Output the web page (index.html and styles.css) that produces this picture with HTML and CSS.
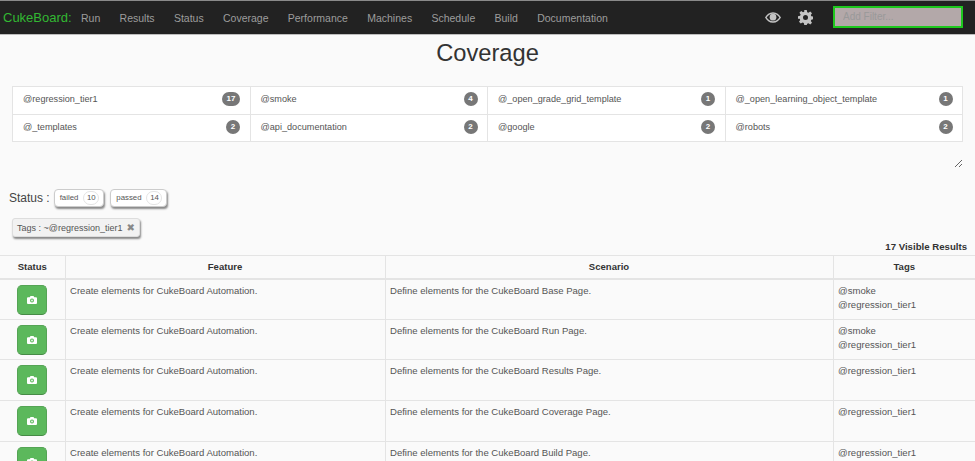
FILE: index.html
```html
<!DOCTYPE html>
<html lang="en">
<head>
<meta charset="utf-8">
<title>CukeBoard: Coverage</title>
<link rel="stylesheet" href="styles.css">
</head>
<body>
<svg class="sprites" width="0" height="0" aria-hidden="true">
  <symbol id="camera" viewBox="0 0 20 16">
    <path fill="#fff" d="M7 0h6l1.5 2.5H18a2 2 0 0 1 2 2V14a2 2 0 0 1-2 2H2a2 2 0 0 1-2-2V4.500a2 2 0 0 1 2-2h3.500z"/>
    <circle cx="10" cy="9" r="4" fill="#5cb85c"/>
    <circle cx="10" cy="9" r="2.200" fill="#d8f0d8"/>
  </symbol>
</svg>
<header class="navbar">
  <span class="brand">CukeBoard:</span>
  <nav class="nav">
    <a>Run</a><a>Results</a><a>Status</a><a>Coverage</a><a>Performance</a><a>Machines</a><a>Schedule</a><a>Build</a><a>Documentation</a>
  </nav>
  <div class="tools">
    <svg class="eye" viewBox="0 0 24 16" aria-hidden="true">
      <path fill="#c4c4c4" fill-rule="evenodd" d="M12 0C6.500 0 2.500 3.500 0 8c2.500 4.500 6.500 8 12 8s9.500-3.500 12-8c-2.500-4.500-6.500-8-12-8zm0 2.200c4 0 7.300 2.300 9.500 5.800-2.200 3.500-5.500 5.800-9.500 5.800S4.700 11.500 2.500 8C4.700 4.500 8 2.200 12 2.200z"/>
      <circle cx="12" cy="7.500" r="5" fill="#c4c4c4"/>
    </svg>
    <svg class="gear" viewBox="0 0 24 24" aria-hidden="true">
      <path fill="#c4c4c4" fill-rule="evenodd" d="M10 0h4l.7 3.400 2 .8 2.900-1.900 2.800 2.800-1.900 2.900.8 2 3.400.7v4l-3.400.7-.8 2 1.900 2.900-2.800 2.800-2.900-1.900-2 .8L14 24h-4l-.7-3.400-2-.8-2.900 1.900-2.800-2.800 1.900-2.900-.8-2L0 14v-4l3.400-.7.8-2-1.900-2.900 2.800-2.800 2.900 1.900 2-.8zM12 8a4 4 0 1 0 0 8 4 4 0 0 0 0-8z"/>
    </svg>
    <input class="filter" type="text" placeholder="Add Filter...">
  </div>
</header>
<main>
  <h1 class="title">Coverage</h1>
  <section class="tagbox">
    <div class="taggrid">
      <div class="tag"><span>@regression_tier1</span><b class="count">17</b></div>
      <div class="tag"><span>@smoke</span><b class="count">4</b></div>
      <div class="tag"><span>@_open_grade_grid_template</span><b class="count">1</b></div>
      <div class="tag"><span>@_open_learning_object_template</span><b class="count">1</b></div>
      <div class="tag"><span>@_templates</span><b class="count">2</b></div>
      <div class="tag"><span>@api_documentation</span><b class="count">2</b></div>
      <div class="tag"><span>@google</span><b class="count">2</b></div>
      <div class="tag"><span>@robots</span><b class="count">2</b></div>
    </div>
  </section>
  <div class="statusline">
    <span class="statuslabel">Status :</span>
    <span class="pill">failed <i>10</i></span>
    <span class="pill">passed <i>14</i></span>
  </div>
  <div class="chip">Tags : ~@regression_tier1 <span class="chipx">✖</span></div>
  <div class="visible">17 Visible Results</div>
  <table class="results">
    <thead>
      <tr><th class="c-status">Status</th><th class="c-feature">Feature</th><th class="c-scenario">Scenario</th><th class="c-tags">Tags</th></tr>
    </thead>
    <tbody>
      <tr>
        <td class="cell-btn"><span class="shot"><svg><use href="#camera"/></svg></span></td>
        <td>Create elements for CukeBoard Automation.</td>
        <td>Define elements for the CukeBoard Base Page.</td>
        <td>@smoke<br>@regression_tier1</td>
      </tr>
      <tr>
        <td class="cell-btn"><span class="shot"><svg><use href="#camera"/></svg></span></td>
        <td>Create elements for CukeBoard Automation.</td>
        <td>Define elements for the CukeBoard Run Page.</td>
        <td>@smoke<br>@regression_tier1</td>
      </tr>
      <tr>
        <td class="cell-btn"><span class="shot"><svg><use href="#camera"/></svg></span></td>
        <td>Create elements for CukeBoard Automation.</td>
        <td>Define elements for the CukeBoard Results Page.</td>
        <td>@regression_tier1</td>
      </tr>
      <tr>
        <td class="cell-btn"><span class="shot"><svg><use href="#camera"/></svg></span></td>
        <td>Create elements for CukeBoard Automation.</td>
        <td>Define elements for the CukeBoard Coverage Page.</td>
        <td>@regression_tier1</td>
      </tr>
      <tr>
        <td class="cell-btn"><span class="shot"><svg><use href="#camera"/></svg></span></td>
        <td>Create elements for CukeBoard Automation.</td>
        <td>Define elements for the CukeBoard Build Page.</td>
        <td>@regression_tier1</td>
      </tr>
    </tbody>
  </table>
</main>
</body>
</html>
```
FILE: styles.css
```css
* { box-sizing: border-box; }
html, body { height: 100%; }
body {
  margin: 0;
  overflow: hidden;
  background: #fafafa;
  color: #555;
  font: 9.550px/14px "Liberation Sans", Arial, sans-serif;
}
.sprites { display: block; height: 0; }
.navbar {
  display: flex;
  align-items: center;
  height: 35px;
  padding-left: 3px;
  background: #222;
  border-top: 1px solid #8a8a8a;
  border-bottom: 1px solid #bdbdbd;
}
.brand { color: #32b832; font-size: 13px; width: 78px; }
.nav { display: flex; gap: 19.300px; font-size: 10.500px; color: #9d9d9d; }
.tools { display: flex; align-items: center; margin-left: auto; margin-right: 12px; }
.eye { width: 16px; height: 11px; margin-right: 17px; }
.gear { width: 15px; height: 15px; margin-right: 20px; }
.filter {
  width: 130px;
  height: 22px;
  margin-top: -1px;
  padding: 0 8px 2px;
  background: #b3a8a9;
  border: 2px solid #1ec81e;
  font: 10px "Liberation Sans", Arial, sans-serif;
  border-radius: 0;
}
.filter::placeholder { color: #999; }
.title {
  margin: 5px 0 0;
  height: 46px;
  font-size: 23.700px;
  line-height: 27px;
  font-weight: 400;
  color: #333;
  text-align: center;
}
.tagbox {
  margin: 0 12px;
  height: 82px;
  overflow: auto;
  resize: vertical;
}
.taggrid {
  display: grid;
  grid-template-columns: repeat(4, 1fr);
  gap: 1px;
  background: #e4e4e4;
  border: 1px solid #e4e4e4;
}
.tag {
  display: flex;
  align-items: center;
  justify-content: space-between;
  height: 26.500px;
  padding: 0 9.500px 2px 10px;
  background: #fff;
  font-size: 9.150px;
}
.count {
  min-width: 14px;
  height: 14px;
  padding: 0 4.500px;
  border-radius: 7px;
  background: #777;
  color: #fff;
  font-size: 8px;
  line-height: 14px;
  text-align: center;
}
.statusline { display: flex; align-items: center; gap: 6px; margin: 21px 0 0 9px; height: 18px; }
.statuslabel { font-size: 12px; color: #444; margin-right: -2px; }
.pill {
  display: flex;
  align-items: center;
  gap: 5px;
  height: 18px;
  padding: 0 4px 0 5px;
  background: #fff;
  border: 1px solid #ccc;
  border-radius: 4px;
  box-shadow: 1px 2px 2px #888;
  font-size: 7.800px;
}
.pill i {
  width: 16px;
  font-style: normal;
  text-align: center;
  border: 1px solid #e4e4e4;
  border-radius: 8px;
  line-height: 12px;
}
.chip {
  display: flex;
  align-items: center;
  justify-content: space-between;
  width: 128px;
  height: 19px;
  margin: 11px 0 0 12px;
  padding: 0 4px;
  background: #f2f2f2;
  border: 1px solid #ddd;
  border-radius: 3px;
  box-shadow: 1px 2px 2px #888;
  font-size: 9px;
  white-space: nowrap;
}
.chipx { color: #888; font: 10px "DejaVu Sans", sans-serif; }
.visible { margin-top: 3px; height: 14px; padding-right: 8px; text-align: right; font-weight: 700; color: #333; font-size: 9.650px; }
.results {
  width: 975px;
  table-layout: fixed;
  border-collapse: collapse;
  margin-top: 1px;
}
.c-status { width: 65px; }
.c-feature { width: 320px; }
.c-scenario { width: 448px; }
.c-tags { width: 142px; }
.results th {
  height: 23px;
  padding: 0;
  text-align: center;
  color: #333;
  border: 1px solid #e4e4e4;
  border-bottom-width: 2px;
}
.results td {
  height: 40.700px;
  padding: 4px 4.500px;
  vertical-align: top;
  border: 1px solid #e4e4e4;
}
.results th:first-child, .results td:first-child { border-left: 0; }
.results th:last-child, .results td:last-child { border-right: 0; }
.results .cell-btn { text-align: center; padding: 5px 0 0; }
.shot {
  display: inline-flex;
  align-items: center;
  justify-content: center;
  width: 30px;
  height: 30px;
  background: #5cb85c;
  border: 1px solid #55a455;
  border-bottom-color: #468a46;
  border-radius: 5px;
}
.shot svg { width: 10px; height: 8px; }
```
